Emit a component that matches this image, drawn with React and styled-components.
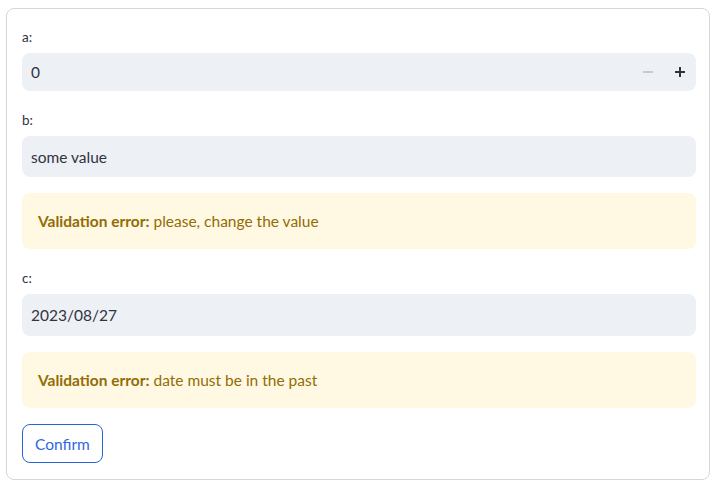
import React, { useState } from "react"
import styled, { createGlobalStyle } from "styled-components"

const colors = {
  text: "#31333f",
  inputBg: "#edf0f5",
  border: "#d6d6d9",
  warnBg: "#fff9e3",
  warnText: "#926c05",
  blue: "#2563d9",
  blueText: "#3366dd",
}

const GlobalStyle = createGlobalStyle`
  html, body {
    margin: 0;
    padding: 0;
    background: #ffffff;
  }
  body {
    font-family: "Source Sans Pro", Lato, "Noto Sans", sans-serif;
    color: ${colors.text};
    -webkit-font-smoothing: antialiased;
  }
  * {
    box-sizing: border-box;
  }
`

const StyledForm = styled.form`
  display: flex;
  flex-direction: column;
  gap: 16px;
  width: 704px;
  margin: 8px 0 0 6px;
  padding: 15px 13px 16px 15px;
  border: 1px solid ${colors.border};
  border-radius: 8px;
`

const Field = styled.div`
  display: flex;
  flex-direction: column;
`

const Label = styled.label`
  display: block;
  padding-top: 3px;
  margin-bottom: 6px;
  font-size: 13.5px;
  line-height: 20px;
  color: ${colors.text};
`

const InputBox = styled.div`
  display: flex;
  align-items: center;
  height: ${(props) => props.$height || 41}px;
  background: ${colors.inputBg};
  border-radius: 8px;
  overflow: hidden;
`

const TextInput = styled.input`
  flex: 1;
  min-width: 0;
  height: 100%;
  padding: 0 9px;
  border: none;
  outline: none;
  background: transparent;
  font-family: inherit;
  font-size: 15.5px;
  color: ${colors.text};
`

const StepButton = styled.button`
  display: flex;
  align-items: center;
  justify-content: center;
  width: 32px;
  height: 100%;
  padding: 0;
  border: none;
  background: transparent;
  color: ${(props) => (props.disabled ? "#c8cad1" : colors.text)};
  cursor: ${(props) => (props.disabled ? "default" : "pointer")};
`

const Alert = styled.div`
  display: flex;
  align-items: center;
  height: 56px;
  padding: 0 16px;
  background: ${colors.warnBg};
  border-radius: 8px;
  font-size: 15.5px;
  color: ${colors.warnText};

  strong {
    font-weight: 700;
    margin-right: 4px;
  }
`

const ButtonRow = styled.div`
  display: flex;
`

const SubmitButton = styled.button`
  height: 39px;
  padding: 0 12px;
  border: 1px solid ${colors.blue};
  border-radius: 8px;
  background: #ffffff;
  font-family: inherit;
  font-size: 15.5px;
  color: ${colors.blueText};
  cursor: pointer;
`

const Minus = () => (
  <svg width="10" height="10" viewBox="0 0 10 10">
    <rect x="0" y="4" width="10" height="2" fill="currentColor" />
  </svg>
)

const Plus = () => (
  <svg width="10" height="10" viewBox="0 0 10 10">
    <rect x="0" y="4" width="10" height="2" fill="currentColor" />
    <rect x="4" y="0" width="2" height="10" fill="currentColor" />
  </svg>
)

const App = () => {
  const [a, setA] = useState(0)
  const [b, setB] = useState("some value")
  const [c, setC] = useState("2023/08/27")

  return (
    <>
      <GlobalStyle />
      <StyledForm onSubmit={(e) => e.preventDefault()}>
        <Field>
          <Label>a:</Label>
          <InputBox $height={38}>
            <TextInput
              value={a}
              onChange={(e) => setA(Number(e.target.value) || 0)}
            />
            <StepButton type="button" disabled={a <= 0} onClick={() => setA(a - 1)}>
              <Minus />
            </StepButton>
            <StepButton type="button" onClick={() => setA(a + 1)}>
              <Plus />
            </StepButton>
          </InputBox>
        </Field>
        <Field>
          <Label>b:</Label>
          <InputBox>
            <TextInput value={b} onChange={(e) => setB(e.target.value)} />
          </InputBox>
        </Field>
        <Alert>
          <strong>Validation error:</strong> please, change the value
        </Alert>
        <Field>
          <Label>c:</Label>
          <InputBox $height={42}>
            <TextInput value={c} onChange={(e) => setC(e.target.value)} />
          </InputBox>
        </Field>
        <Alert>
          <strong>Validation error:</strong> date must be in the past
        </Alert>
        <ButtonRow>
          <SubmitButton type="submit">Confirm</SubmitButton>
        </ButtonRow>
      </StyledForm>
    </>
  )
}

export default App
